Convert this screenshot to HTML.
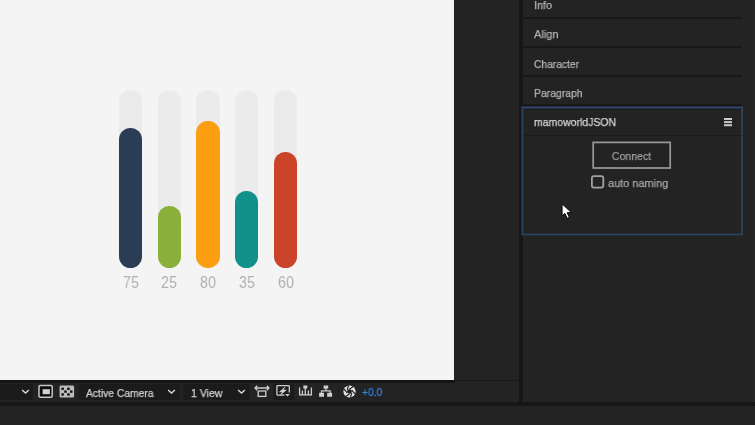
<!DOCTYPE html>
<html><head><meta charset="utf-8">
<style>
*{box-sizing:border-box;margin:0;padding:0}
html,body{width:755px;height:425px;overflow:hidden;background:#232323;font-family:"Liberation Sans",sans-serif}
#root{position:relative;width:755px;height:425px;background:#232323;overflow:hidden}
.abs{position:absolute}
.ptxt,.tt,.lbl{will-change:transform}
.ptxt,.tt{-webkit-text-stroke:0.25px currentColor}
#canvas{left:0;top:0;width:454.2px;height:379.7px;z-index:2;background:#f4f4f4}
.track{position:absolute;width:23.4px;top:90px;height:177.7px;border-radius:11.7px;background:#ebebeb}
.fill{position:absolute;width:23.4px;border-radius:11.7px}
.lbl{position:absolute;top:272.6px;width:40px;text-align:center;font-size:16.5px;transform:scaleX(0.87);color:#b2b2b2;line-height:18px;font-weight:400}
.sep{position:absolute;left:521px;width:220.6px;height:2px;background:#181818}
.ptxt{position:absolute;left:534px;font-size:11.5px;transform-origin:0 50%;color:#b4b4b4;line-height:14px;white-space:nowrap}
.dd{position:absolute;top:384px;height:16px;background:#1b1b1b;border-radius:2px}
.tt{position:absolute;font-size:11px;transform-origin:0 50%;color:#d2d2d2;line-height:14px;white-space:nowrap}
svg{position:absolute;overflow:visible}
</style></head><body>
<div id="root">
  <!-- canvas -->
  <div id="canvas" class="abs">
    <div class="track" style="left:119.1px"></div>
    <div class="track" style="left:157.7px"></div>
    <div class="track" style="left:196.4px"></div>
    <div class="track" style="left:235.1px"></div>
    <div class="track" style="left:273.8px"></div>
    <div class="fill" style="left:119.1px;top:128px;height:140px;background:#2a3d54"></div>
    <div class="fill" style="left:157.7px;top:206px;height:62px;background:#8ab03a"></div>
    <div class="fill" style="left:196.4px;top:120.5px;height:147.5px;background:#fb9e12"></div>
    <div class="fill" style="left:235.1px;top:190.5px;height:77.5px;background:#12908a"></div>
    <div class="fill" style="left:273.8px;top:151.5px;height:116.5px;background:#cb4429"></div>
    <div class="lbl" style="left:110.8px">75</div>
    <div class="lbl" style="left:149.4px">25</div>
    <div class="lbl" style="left:187.8px">80</div>
    <div class="lbl" style="left:226.7px">35</div>
    <div class="lbl" style="left:265.7px">60</div>
  </div>
  <!-- below canvas strip -->
  <div class="abs" style="left:0;top:379.6px;width:455px;height:3px;background:#141414"></div>
  <div class="abs" style="left:454px;top:379.5px;width:65px;height:1.8px;background:#1a1a1a"></div>
  <!-- vertical divider -->
  <div class="abs" style="left:518.5px;top:0;width:4px;height:404px;background:#161616"></div>
  <!-- horizontal band -->
  <div class="abs" style="left:0;top:402px;width:755px;height:4px;background:#161616"></div>

  <!-- right panel -->
  <div class="abs" style="left:752.7px;top:0;width:3px;height:402px;background:#282828"></div>
  <div class="sep" style="top:17px;height:2.3px"></div>
  <div class="sep" style="top:46px;height:2.3px"></div>
  <div class="sep" style="top:75px;height:2.3px"></div>
  <div class="ptxt" style="transform:scaleX(0.943);top:-2.2px">Info</div>
  <div class="ptxt" style="transform:scaleX(0.958);top:27.2px">Align</div>
  <div class="ptxt" style="transform:scaleX(0.891);top:56.5px">Character</div>
  <div class="ptxt" style="transform:scaleX(0.905);top:85.6px">Paragraph</div>
  <div class="sep" style="top:104.3px;height:2.3px"></div>
  <svg style="left:520px;top:105px" width="226" height="133" viewBox="520 105 226 133"><rect x="522.4" y="107.5" width="219.6" height="127" fill="#232323" stroke="#2d4364" stroke-width="1.7"/><rect x="521.6" y="106.7" width="221.2" height="1.9" fill="#35466f"/><rect x="523.3" y="108.6" width="217.8" height="1.2" fill="#1a1c1e"/></svg>
  <div class="abs" style="left:523.5px;top:134.5px;width:218px;height:1.5px;background:#1a1a1a"></div>
  <div class="ptxt" style="transform:scaleX(0.911);top:114.9px;color:#d6d6d6">mamoworldJSON</div>
  <div class="abs" style="left:723.7px;top:118px;width:8.3px;height:1.6px;background:#cacaca;box-shadow:0 3.1px 0 #cacaca,0 6.2px 0 #cacaca"></div>
  <svg style="left:590px;top:140px" width="84" height="50" viewBox="590 140 84 50"><rect x="593.2" y="142.4" width="77" height="25.6" fill="none" stroke="#9a9a9a" stroke-width="1.7"/><rect x="591.9" y="176.2" width="11.4" height="11.4" rx="2" fill="none" stroke="#a2a2a2" stroke-width="1.8"/></svg>
  <div class="ptxt" style="left:592px;width:79px;text-align:center;top:148.8px;color:#a0a0a0;transform-origin:50% 50%;transform:scaleX(0.915)">Connect</div>
    <div class="ptxt" style="transform:scaleX(0.951);left:608px;top:175.7px;color:#a8a8a8">auto naming</div>
  <!-- cursor -->
  <svg style="left:561px;top:203px" width="14" height="20" viewBox="0 0 14 20"><path d="M1.1 0.9 L1.1 12.8 L3.9 10.4 L6.3 15.3 L8.4 14.3 L6.1 9.7 L10.4 9.5 Z" fill="#fff" stroke="#0c0c0c" stroke-width="1" stroke-linejoin="round"/></svg>

  <!-- bottom toolbar -->
  <div class="dd" style="left:-4px;width:37px"></div>
  <svg style="left:20.9px;top:389.2px" width="9" height="6" viewBox="0 0 9 6"><path d="M1.1 1 L4.5 4.1 L7.9 1" fill="none" stroke="#d8d8d8" stroke-width="1.4"/></svg>
  <!-- ROI icon -->
  <svg style="left:38px;top:384px" width="16" height="15" viewBox="38 384 16 15"><rect x="39" y="385.6" width="13.2" height="11.7" rx="1.2" fill="#0c0c0c" stroke="#c6c6c6" stroke-width="1.5"/><rect x="42.6" y="389.2" width="7.3" height="5" fill="#d0d0d0"/></svg>
  <!-- grid icon -->
  <svg style="left:59px;top:384px" width="16" height="15" viewBox="59 384 16 15"><rect x="59.6" y="385.6" width="14.5" height="12" rx="1.3" fill="#bdbdbd"/><g fill="#151515"><rect x="61.4" y="387.6" width="2.5" height="2.4"/><rect x="67.2" y="387.6" width="2.5" height="2.4"/><rect x="64.2" y="390.4" width="2.5" height="2.4"/><rect x="70" y="390.4" width="2.5" height="2.4"/><rect x="61.4" y="393.3" width="2.5" height="2.4"/><rect x="67.2" y="393.3" width="2.5" height="2.4"/></g></svg>
  <div class="dd" style="left:79px;width:100.5px"></div>
  <div class="tt" style="transform:scaleX(0.936);left:85.5px;top:385.5px">Active Camera</div>
  <svg style="left:167px;top:389.2px" width="9" height="6" viewBox="0 0 9 6"><path d="M1.1 1 L4.5 4.1 L7.9 1" fill="none" stroke="#d8d8d8" stroke-width="1.4"/></svg>
  <div class="dd" style="left:183px;width:66.5px"></div>
  <div class="tt" style="transform:scaleX(0.96);left:191px;top:385.5px">1 View</div>
  <svg style="left:237.2px;top:389.2px" width="9" height="6" viewBox="0 0 9 6"><path d="M1.1 1 L4.5 4.1 L7.9 1" fill="none" stroke="#d8d8d8" stroke-width="1.4"/></svg>
  <!-- icon A -->
  <svg style="left:254px;top:385px" width="16" height="13" viewBox="0 0 16 13"><path d="M1 3 H15 M3.2 0.8 L1 3 L3.2 5.2 M12.8 0.8 L15 3 L12.8 5.2" fill="none" stroke="#cfcfcf" stroke-width="1.3"/><rect x="4.2" y="6" width="7.6" height="5.4" fill="none" stroke="#cfcfcf" stroke-width="1.3"/></svg>
  <!-- icon B -->
  <div class="dd" style="left:273px;width:20.5px"></div>
  <svg style="left:276px;top:385px" width="15" height="13" viewBox="276 385 15 13"><path d="M284.6 395.2 H277.6 Q276.9 395.2 276.9 394.5 V386.4 Q276.9 385.7 277.6 385.7 H288.6 Q289.3 385.7 289.3 386.4 V392.6" fill="none" stroke="#cfcfcf" stroke-width="1.3"/><path d="M285 387 L279.4 391.9 H282.4 L280.4 395 L286.4 390 H283.3 Z" fill="#d4d4d4" stroke="#d4d4d4" stroke-width="0.5" stroke-linejoin="round"/><path d="M285.2 394 H289.8 L287.5 396.6 Z" fill="#cfcfcf"/></svg>
  <!-- icon C -->
  <svg style="left:298px;top:385px" width="15" height="12" viewBox="298 385 15 12"><path d="M299.6 387.4 V394.8 H311.4 V387.4 M302.4 390.6 V394.8 M305.3 388 V394.8 M308.4 390.6 V394.8" fill="none" stroke="#cfcfcf" stroke-width="1.3"/><rect x="303.3" y="385.5" width="4" height="3" fill="#cfcfcf"/></svg>
  <!-- icon D -->
  <svg style="left:319px;top:385px" width="14" height="13" viewBox="319 385 14 13"><rect x="323.6" y="385.5" width="4.6" height="3.2" fill="#cfcfcf"/><rect x="319.1" y="392.8" width="4.9" height="4" fill="#cfcfcf"/><rect x="327.2" y="392.8" width="4.9" height="4" fill="#cfcfcf"/><path d="M325.9 388.5 V390.6 M321.5 393 V390.8 H330.2 V393" fill="none" stroke="#cfcfcf" stroke-width="1.2"/></svg>
  <div class="abs" style="left:338px;top:385px;width:1px;height:13px;background:#1e1e1e"></div>
  <!-- aperture -->
  <svg style="left:343px;top:385px" width="13" height="13" viewBox="0 0 13 13"><circle cx="6.5" cy="6.5" r="6.1" fill="#e6e6e6"/><circle cx="6.5" cy="6.5" r="2.3" fill="#1c1c1c"/><g stroke="#1c1c1c" stroke-width="1.15"><path d="M6.5 3.9 L10.5 1.5"/><path d="M8.8 5.2 L11.9 8.8"/><path d="M8.8 7.8 L7.5 12.3"/><path d="M6.5 9.1 L2.5 11.5"/><path d="M4.2 7.8 L1.1 4.2"/><path d="M4.2 5.2 L5.5 0.7"/></g></svg>
  <div class="tt" style="transform:scaleX(0.93);left:362px;top:384.8px;color:#3684e4;font-weight:400">+0.0</div>
</div>
</body></html>
